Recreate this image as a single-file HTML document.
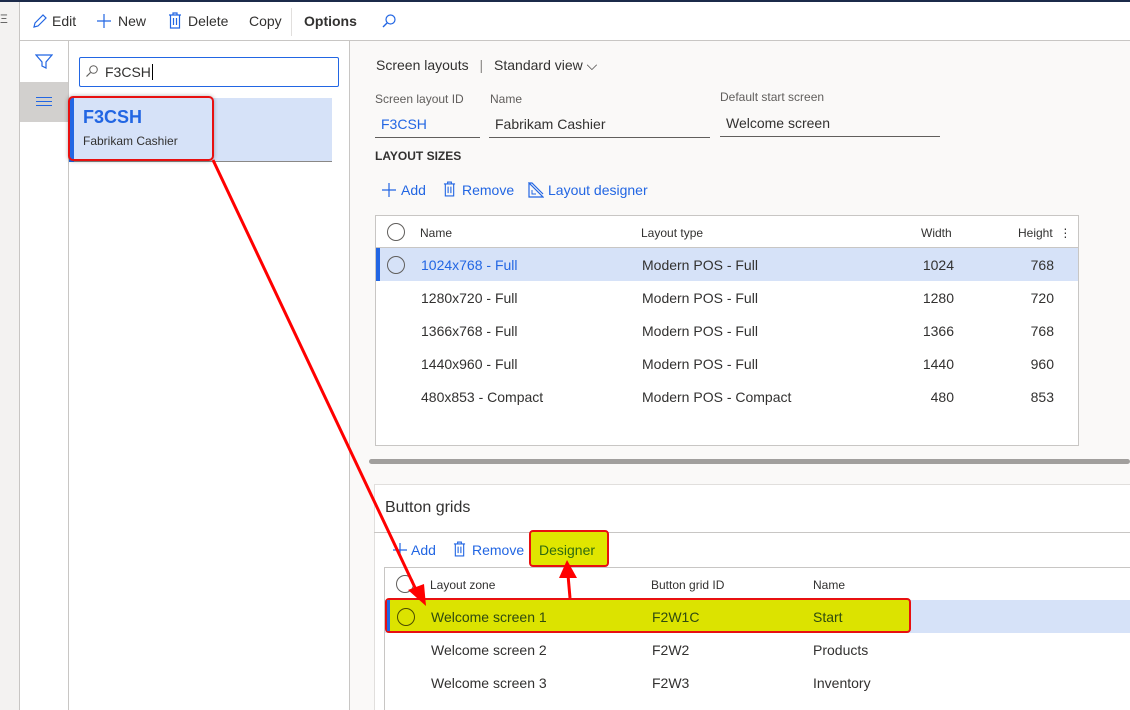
<!DOCTYPE html>
<html><head><meta charset="utf-8"><style>
*{box-sizing:border-box;margin:0;padding:0}
body{width:1130px;height:710px;overflow:hidden;position:relative;font-family:"Liberation Sans",sans-serif;font-size:13px;color:#323130;background:#faf9f8}
.a{position:absolute}
.blue{color:#2266e3}
.rad{position:absolute;width:18px;height:18px;border:1px solid #605e5c;border-radius:50%}
.t{position:absolute;top:13px;font-size:14px}
</style></head><body>
<div class="a" style="left:0;top:0;width:1130px;height:2px;background:#1b2a4a"></div>
<div class="a" style="left:0;top:2px;width:20px;height:708px;background:#f3f2f1;border-right:1px solid #c8c6c4"></div>
<div class="a" style="left:0;top:12px;font-size:12px;color:#555">Ξ</div>
<div class="a" style="left:20px;top:2px;width:1110px;height:39px;background:#fff;border-bottom:1px solid #c8c6c4"></div>
<svg class="a" style="left:32px;top:13px" width="16" height="16" viewBox="0 0 16 16"><path d="M2 14l1-4 8-8 3 3-8 8z" fill="none" stroke="#2266e3" stroke-width="1.2"/></svg>
<span class="t" style="left:52px">Edit</span>
<svg class="a" style="left:96px;top:13px" width="16" height="16" viewBox="0 0 16 16"><path d="M8 1v14M1 8h14" stroke="#2266e3" stroke-width="1.2"/></svg>
<span class="t" style="left:118px">New</span>
<svg class="a" style="left:168px;top:12px" width="14" height="17" viewBox="0 0 14 17"><path d="M1 3h12M5 3V1h4v2M2.5 3v13h9V3M5.5 6v7M8.5 6v7" fill="none" stroke="#2266e3" stroke-width="1.2"/></svg>
<span class="t" style="left:188px">Delete</span>
<span class="t" style="left:249px">Copy</span>
<div class="a" style="left:291px;top:8px;width:1px;height:28px;background:#e1dfdd"></div>
<span class="t" style="left:304px;font-weight:bold">Options</span>
<svg class="a" style="left:381px;top:13px" width="16" height="16" viewBox="0 0 16 16"><circle cx="9.5" cy="6.5" r="4.5" fill="none" stroke="#2266e3" stroke-width="1.2"/><path d="M6 10l-4 4" stroke="#2266e3" stroke-width="1.4"/></svg>
<div class="a" style="left:20px;top:41px;width:49px;height:669px;background:#fff;border-right:1px solid #c8c6c4"></div>
<svg class="a" style="left:35px;top:54px" width="18" height="16" viewBox="0 0 18 16"><path d="M1 1h16l-6 7v6l-4-2V8z" fill="none" stroke="#2266e3" stroke-width="1.2"/></svg>
<div class="a" style="left:20px;top:82px;width:48px;height:40px;background:#d2d0ce"></div>
<div class="a" style="left:36px;top:97px;width:16px;height:1px;background:#2266e3;box-shadow:0 4px 0 #2266e3,0 8px 0 #2266e3"></div>
<div class="a" style="left:69px;top:41px;width:281px;height:669px;background:#fff;border-right:1px solid #c8c6c4"></div>
<div class="a" style="left:79px;top:57px;width:260px;height:30px;border:1px solid #2266e3;border-radius:2px;background:#fff"></div>
<svg class="a" style="left:85px;top:64px" width="14" height="14" viewBox="0 0 14 14"><circle cx="8.5" cy="5.5" r="3.8" fill="none" stroke="#605e5c"/><path d="M5.5 8.5l-4 4" stroke="#605e5c" stroke-width="1.2"/></svg>
<div class="a" style="left:105px;top:64px;font-size:14px">F3CSH<span style="border-left:1px solid #000;margin-left:1px"></span></div>
<div class="a" style="left:69px;top:98px;width:263px;height:64px;background:#d6e2f8;border-bottom:1px solid #8a8886"></div>
<div class="a" style="left:69px;top:98px;width:5px;height:64px;background:#2266e3"></div>
<div class="a" style="left:83px;top:107px;font-size:18px;font-weight:bold;color:#2266e3">F3CSH</div>
<div class="a" style="left:83px;top:134px;font-size:12px">Fabrikam Cashier</div>
<div class="a" style="left:68px;top:96px;width:146px;height:65px;border:2px solid #e81010;border-radius:5px;box-shadow:0 0 4px rgba(0,0,0,.3)"></div>

<div class="a" style="left:376px;top:57px;font-size:14px">Screen layouts <span style="color:#8a8886;margin:0 7px">|</span> Standard view ⌵</div>
<div class="a" style="left:375px;top:92px;font-size:12px;color:#605e5c">Screen layout ID</div>
<div class="a" style="left:490px;top:92px;font-size:12px;color:#605e5c">Name</div>
<div class="a" style="left:720px;top:90px;font-size:12px;color:#605e5c">Default start screen</div>
<div class="a" style="left:375px;top:112px;width:105px;height:26px;border-bottom:1px solid #605e5c;padding:4px 6px;font-size:14px;color:#2266e3">F3CSH</div>
<div class="a" style="left:489px;top:112px;width:221px;height:26px;border-bottom:1px solid #605e5c;padding:4px 6px;font-size:14px">Fabrikam Cashier</div>
<div class="a" style="left:720px;top:111px;width:220px;height:26px;border-bottom:1px solid #605e5c;padding:4px 6px;font-size:14px">Welcome screen</div>
<div class="a" style="left:375px;top:149px;font-size:12px;font-weight:bold">LAYOUT SIZES</div>
<svg class="a" style="left:381px;top:182px" width="16" height="16" viewBox="0 0 16 16"><path d="M8 1v14M1 8h14" stroke="#2266e3" stroke-width="1.2"/></svg>
<div class="a blue" style="left:401px;top:182px;font-size:14px">Add</div>
<svg class="a" style="left:443px;top:181px" width="13" height="16" viewBox="0 0 14 17"><path d="M1 3h12M5 3V1h4v2M2.5 3v13h9V3M5.5 6v7M8.5 6v7" fill="none" stroke="#2266e3" stroke-width="1.2"/></svg>
<div class="a blue" style="left:462px;top:182px;font-size:14px">Remove</div>
<svg class="a" style="left:528px;top:182px" width="16" height="16" viewBox="0 0 16 16"><path d="M1 1v14h14zM1 1h3l11 11" fill="none" stroke="#2266e3" stroke-width="1.2"/><path d="M4 8v4h4" fill="none" stroke="#2266e3"/></svg>
<div class="a blue" style="left:548px;top:182px;font-size:14px">Layout designer</div>

<div class="a" style="left:375px;top:215px;width:704px;height:231px;background:#fff;border:1px solid #c8c6c4"></div>
<div class="a" style="left:376px;top:247px;width:702px;height:1px;background:#c8c6c4"></div>
<div class="rad" style="left:387px;top:223px"></div>
<div class="a" style="left:420px;top:226px;font-size:12px">Name</div>
<div class="a" style="left:641px;top:226px;font-size:12px">Layout type</div>
<div class="a" style="left:921px;top:226px;font-size:12px">Width</div>
<div class="a" style="left:1018px;top:226px;font-size:12px">Height &nbsp;⋮</div>
<div class="a" style="left:376px;top:248px;width:702px;height:33px;background:#d6e2f8"></div>
<div class="a" style="left:376px;top:248px;width:4px;height:33px;background:#2266e3"></div>
<div class="rad" style="left:387px;top:256px"></div>
<div class="a" style="left:421px;top:257px;font-size:14px;line-height:16px">
<div style="color:#2266e3">1024x768 - Full</div><div style="margin-top:17px">1280x720 - Full</div><div style="margin-top:17px">1366x768 - Full</div><div style="margin-top:17px">1440x960 - Full</div><div style="margin-top:17px">480x853 - Compact</div></div>
<div class="a" style="left:642px;top:257px;font-size:14px;line-height:16px">
<div>Modern POS - Full</div><div style="margin-top:17px">Modern POS - Full</div><div style="margin-top:17px">Modern POS - Full</div><div style="margin-top:17px">Modern POS - Full</div><div style="margin-top:17px">Modern POS - Compact</div></div>
<div class="a" style="left:900px;top:257px;width:54px;text-align:right;font-size:14px;line-height:16px">
<div>1024</div><div style="margin-top:17px">1280</div><div style="margin-top:17px">1366</div><div style="margin-top:17px">1440</div><div style="margin-top:17px">480</div></div>
<div class="a" style="left:1000px;top:257px;width:54px;text-align:right;font-size:14px;line-height:16px">
<div>768</div><div style="margin-top:17px">720</div><div style="margin-top:17px">768</div><div style="margin-top:17px">960</div><div style="margin-top:17px">853</div></div>

<div class="a" style="left:369px;top:459px;width:761px;height:5px;background:#a19f9d;border-radius:3px"></div>
<div class="a" style="left:374px;top:484px;width:756px;height:226px;background:#fff;border-left:1px solid #e1dfdd;border-top:1px solid #e1dfdd"></div>
<div class="a" style="left:385px;top:499px;font-size:16px">Button grids</div>
<div class="a" style="left:374px;top:532px;width:756px;height:1px;background:#c8c6c4"></div>
<svg class="a" style="left:392px;top:542px" width="16" height="16" viewBox="0 0 16 16"><path d="M8 1v14M1 8h14" stroke="#2266e3" stroke-width="1.2"/></svg>
<div class="a blue" style="left:411px;top:542px;font-size:14px">Add</div>
<svg class="a" style="left:453px;top:541px" width="13" height="16" viewBox="0 0 14 17"><path d="M1 3h12M5 3V1h4v2M2.5 3v13h9V3M5.5 6v7M8.5 6v7" fill="none" stroke="#2266e3" stroke-width="1.2"/></svg>
<div class="a blue" style="left:472px;top:542px;font-size:14px">Remove</div>
<div class="a" style="left:529px;top:530px;width:80px;height:37px;background:#e0e600;border:2px solid #e81010;border-radius:4px;font-size:14px;color:#2f6a10;padding:10px 0 0 8px">Designer</div>
<div class="a" style="left:384px;top:567px;width:746px;height:143px;border-left:1px solid #c8c6c4;border-top:1px solid #c8c6c4"></div>
<div class="rad" style="left:396px;top:575px"></div>
<div class="a" style="left:430px;top:578px;font-size:12px">Layout zone</div>
<div class="a" style="left:651px;top:578px;font-size:12px">Button grid ID</div>
<div class="a" style="left:813px;top:578px;font-size:12px">Name</div>
<div class="a" style="left:385px;top:600px;width:745px;height:33px;background:#d6e2f8"></div>
<div class="a" style="left:385px;top:598px;width:526px;height:35px;background:#dce300;border:2px solid #e81010;border-radius:4px"></div>
<div class="a" style="left:387px;top:600px;width:3px;height:31px;background:#2266e3"></div>
<div class="rad" style="left:397px;top:608px;border-color:#4b4b00"></div>
<div class="a" style="left:431px;top:609px;font-size:14px;line-height:16px"><div style="color:#2f4a10">Welcome screen 1</div><div style="margin-top:17px">Welcome screen 2</div><div style="margin-top:17px">Welcome screen 3</div></div>
<div class="a" style="left:652px;top:609px;font-size:14px;line-height:16px"><div style="color:#2f4a10">F2W1C</div><div style="margin-top:17px">F2W2</div><div style="margin-top:17px">F2W3</div></div>
<div class="a" style="left:813px;top:609px;font-size:14px;line-height:16px"><div style="color:#2f4a10">Start</div><div style="margin-top:17px">Products</div><div style="margin-top:17px">Inventory</div></div>

<svg class="a" style="left:0;top:0" width="1130" height="710">
<line x1="213" y1="160" x2="418" y2="594" stroke="#f00" stroke-width="3"/>
<polygon points="426,606 408,590 424,584" fill="#f00"/>
<line x1="570" y1="598" x2="568" y2="575" stroke="#f00" stroke-width="3"/>
<polygon points="567,560 559,578 577,578" fill="#f00"/>
</svg>
</body></html>
